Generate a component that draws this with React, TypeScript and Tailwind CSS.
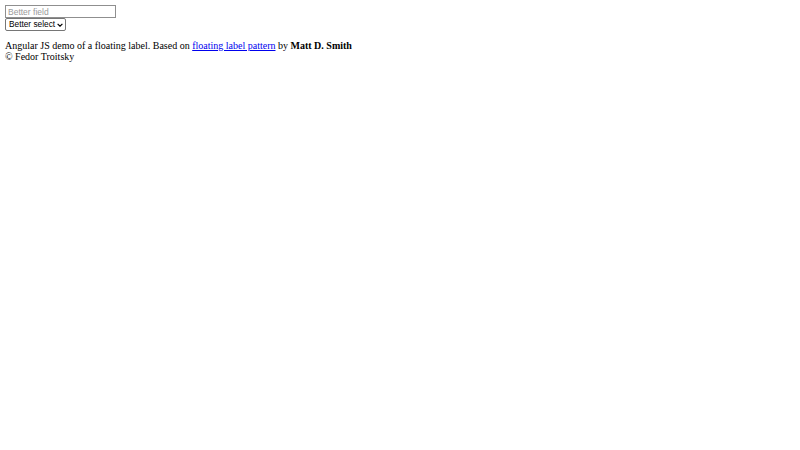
export default function App() {
  return (
    <div className="min-h-screen bg-white p-[5px] text-black">
      <form className="flex flex-col items-start">
        <input
          type="text"
          placeholder="Better field"
          className="h-[13px] w-[111px] border border-[#8f8f8f] px-[2px] text-[8.5px] leading-none outline-none placeholder:text-[#9a9a9a] font-['Liberation_Sans',Arial,sans-serif]"
        />
        <div className="relative flex">
          <select
            defaultValue=""
            className="h-[13px] w-[61px] appearance-none rounded-[2px] border border-[#767676] bg-white pl-[3px] pr-[8px] text-[8.3px] leading-none text-black font-['Liberation_Sans',Arial,sans-serif]"
          >
            <option value="">Better select</option>
          </select>
          <svg
            viewBox="0 0 10 6"
            className="pointer-events-none absolute right-[3px] top-[4.5px] h-[4px] w-[6px]"
          >
            <path d="M1 1 L5 5 L9 1" fill="none" stroke="#000" strokeWidth="2" />
          </svg>
        </div>
      </form>
      <div className="mt-[9px] font-['Liberation_Serif','Times_New_Roman',serif] text-[10px] leading-[11px]">
        <p>
          Angular JS demo of a floating label. Based on{" "}
          <a href="#" className="text-[#0000ee] underline">
            floating label pattern
          </a>{" "}
          by <b>Matt D. Smith</b>
        </p>
        <p>© Fedor Troitsky</p>
      </div>
    </div>
  );
}
